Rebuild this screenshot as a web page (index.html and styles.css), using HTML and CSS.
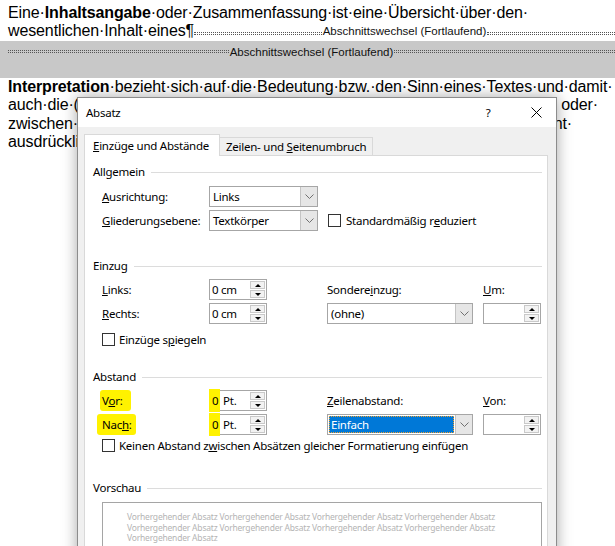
FILE: index.html
```html
<!DOCTYPE html>
<html>
<head>
    <title>Absatz</title>
    <link rel="stylesheet" href="styles.css">
</head>
<body>

<div class="page">
    <!-- Document text behind the dialog -->
    <div class="doc">
        <div class="line">Eine·<b>Inhaltsangabe</b>·oder·Zusammenfassung·ist·eine·Übersicht·über·den·</div>
        <div class="line leader-line">wesentlichen·Inhalt·eines¶<span class="leader"><span class="break-label">Abschnittswechsel (Fortlaufend)</span></span></div>
        <div class="break-band">
            <div class="leader"><span class="break-label">Abschnittswechsel (Fortlaufend)</span></div>
        </div>
        <div class="line"><b>Interpretation</b>·bezieht·sich·auf·die·Bedeutung·bzw.·den·Sinn·eines·Textes·und·damit·</div>
        <div class="line split split-a"><span class="split-left">auch·die·(mögliche)·Absicht·des·Autors</span><span>oder·</span></div>
        <div class="line split split-b"><span class="split-left">zwischen·den·Zeilen·Gesagtes</span><span>nt·</span></div>
        <div class="line">ausdrücklich·gesagt.</div>
    </div>

    <!-- Absatz dialog -->
    <div class="dialog">
        <div class="dialog-title">
            <span class="title-text">Absatz</span>
            <span class="title-help">?</span>
            <span class="title-close">
                <svg width="11" height="11" viewBox="0 0 11 11"><path d="M0.5 0.5 L10.5 10.5 M10.5 0.5 L0.5 10.5" stroke="#000" stroke-width="1" fill="none"/></svg>
            </span>
        </div>

        <div class="dialog-body">
            <div class="tabs">
                <div class="tab tab-active"><u>E</u>inzüge und Abstände</div>
                <div class="tab">Zeilen- und <u>S</u>eitenumbruch</div>
            </div>

            <div class="tab-panel">
                <!-- Allgemein -->
                <div class="group">
                    <div class="group-head">Allgemein</div>
                    <div class="group-body">
                        <div class="field-grid grid-first">
                            <span class="field-label"><u>A</u>usrichtung:</span>
                            <div class="select select-short">
                                <span class="select-value">Links</span>
                                <span class="select-arrow"><svg width="9" height="5" viewBox="0 0 9 5"><path d="M0.5 0.5 L4.5 4.5 L8.5 0.5" stroke="#707070" fill="none"/></svg></span>
                            </div>
                            <span></span><span></span>

                            <span class="field-label"><u>G</u>liederungsebene:</span>
                            <div class="select select-short">
                                <span class="select-value">Textkörper</span>
                                <span class="select-arrow"><svg width="9" height="5" viewBox="0 0 9 5"><path d="M0.5 0.5 L4.5 4.5 L8.5 0.5" stroke="#707070" fill="none"/></svg></span>
                            </div>
                            <div class="check check-inline"><span class="box"></span>Standardmäßig r<u>e</u>duziert</div>
                        </div>
                    </div>
                </div>

                <!-- Einzug -->
                <div class="group group-indent">
                    <div class="group-head">Einzug</div>
                    <div class="group-body">
                        <div class="field-grid">
                            <span class="field-label"><u>L</u>inks:</span>
                            <div class="spin">
                                <span class="spin-value">0 cm</span>
                                <span class="spin-btns"><i class="spin-up"></i><i class="spin-down"></i></span>
                            </div>
                            <span class="field-label">Sondere<u>i</u>nzug:</span>
                            <span class="field-label"><u>U</u>m:</span>

                            <span class="field-label"><u>R</u>echts:</span>
                            <div class="spin">
                                <span class="spin-value">0 cm</span>
                                <span class="spin-btns"><i class="spin-up"></i><i class="spin-down"></i></span>
                            </div>
                            <div class="select select-wide">
                                <span class="select-value">(ohne)</span>
                                <span class="select-arrow"><svg width="9" height="5" viewBox="0 0 9 5"><path d="M0.5 0.5 L4.5 4.5 L8.5 0.5" stroke="#707070" fill="none"/></svg></span>
                            </div>
                            <div class="spin">
                                <span class="spin-value"></span>
                                <span class="spin-btns"><i class="spin-up"></i><i class="spin-down"></i></span>
                            </div>
                        </div>
                        <div class="check check-row check-mirror"><span class="box"></span>Einzüge s<u>p</u>iegeln</div>
                    </div>
                </div>

                <!-- Abstand -->
                <div class="group group-spacing">
                    <div class="group-head">Abstand</div>
                    <div class="group-body">
                        <div class="field-grid">
                            <span class="field-label"><span class="hl hl-vor">V<u>o</u>r:</span></span>
                            <div class="spin">
                                <span class="spin-value"><span class="hl-zero">0</span>&nbsp;Pt.</span>
                                <span class="spin-btns"><i class="spin-up"></i><i class="spin-down"></i></span>
                            </div>
                            <span class="field-label"><u>Z</u>eilenabstand:</span>
                            <span class="field-label"><u>V</u>on:</span>

                            <span class="field-label"><span class="hl hl-nach">Nac<u>h</u>:</span></span>
                            <div class="spin">
                                <span class="spin-value"><span class="hl-zero">0</span>&nbsp;Pt.</span>
                                <span class="spin-btns"><i class="spin-up"></i><i class="spin-down"></i></span>
                            </div>
                            <div class="select select-wide select-focus">
                                <span class="select-value">Einfach</span>
                                <span class="select-arrow"><svg width="9" height="5" viewBox="0 0 9 5"><path d="M0.5 0.5 L4.5 4.5 L8.5 0.5" stroke="#707070" fill="none"/></svg></span>
                            </div>
                            <div class="spin">
                                <span class="spin-value"></span>
                                <span class="spin-btns"><i class="spin-up"></i><i class="spin-down"></i></span>
                            </div>
                        </div>
                        <div class="check check-row check-nospace"><span class="box"></span>Keinen Abstand z<u>w</u>ischen Absätzen gleicher Formatierung einfügen</div>
                    </div>
                </div>

                <!-- Vorschau -->
                <div class="group group-preview">
                    <div class="group-head">Vorschau</div>
                    <div class="group-body">
                        <div class="preview">
                            <div>Vorhergehender Absatz Vorhergehender Absatz Vorhergehender Absatz Vorhergehender Absatz</div>
                            <div>Vorhergehender Absatz Vorhergehender Absatz Vorhergehender Absatz Vorhergehender Absatz</div>
                            <div>Vorhergehender Absatz</div>
                        </div>
                    </div>
                </div>
            </div>
        </div>
    </div>
</div>

</body>
</html>
```

FILE: styles.css
```css
body {
    margin: 0;
    background: #fff;
}

.page {
    position: relative;
    width: 615px;
    height: 546px;
    overflow: hidden;
}

/* Word document behind */
.doc {
    padding-top: 4px;
    font-family: "Liberation Sans", Arial, sans-serif;
    font-size: 16px;
    line-height: 18.4px;
    letter-spacing: -0.12px;
    color: #000;
}

.line {
    padding-left: 8px;
    white-space: nowrap;
    overflow: hidden;
}

.leader-line {
    display: flex;
}

.leader {
    flex: 1;
    display: flex;
    align-items: center;
}

.leader-line .leader {
    align-items: flex-end;
    padding-bottom: 4px;
}

.leader::before,
.leader::after {
    content: "";
    flex: 1;
    height: 1px;
    border-top: 1px dotted #555;
    border-bottom: 1px dotted #555;
    margin-bottom: 2px;
}

.break-label {
    font-size: 11.5px;
    line-height: 11px;
    letter-spacing: 0;
    color: #111;
    padding: 0 1px;
}

.break-band {
    height: 37px;
    background: #c8c8c8;
    padding: 6px 0 0 8px;
    box-sizing: border-box;
}

.split {
    display: flex;
}

.split-left {
    flex: 1;
    min-width: 0;
    overflow: hidden;
}

.split-a {
    padding-right: 17px;
}

.split-b {
    padding-right: 43px;
}

/* Dialog */
.dialog {
    position: absolute;
    left: 77px;
    top: 97px;
    width: 478px;
    height: 470px;
    border: 1px solid #8c8c8c;
    box-shadow: 0 0 14px rgba(0,0,0,0.35);
    font-family: "Noto Sans", "Open Sans", sans-serif;
    font-size: 11.5px;
    letter-spacing: -0.25px;
    color: #000;
    background: #f0f0f0;
}

.dialog-title {
    height: 29px;
    background: #fff;
    display: flex;
    align-items: center;
    padding-left: 8px;
}

.title-text {
    flex: 1;
}

.title-help {
    width: 20px;
    text-align: center;
    margin-right: 18px;
}

.title-close {
    width: 40px;
    display: flex;
    justify-content: center;
}

.dialog-body {
    padding: 7px 8px 0 6px;
}

.tabs {
    display: flex;
    align-items: flex-end;
    height: 21px;
}

.tab {
    height: 17px;
    line-height: 17px;
    padding: 0 6px;
    border: 1px solid #d9d9d9;
    border-bottom: none;
    border-left: none;
    background: #f0f0f0;
    white-space: nowrap;
}

.tab-active {
    position: relative;
    z-index: 1;
    height: 21px;
    line-height: 22px;
    width: 126px;
    padding: 0 0 0 8px;
    margin-bottom: -1px;
    border-left: 1px solid #d9d9d9;
    background: #fff;
}

.tab-panel {
    background: #fff;
    border: 1px solid #d9d9d9;
    height: 420px;
    padding: 8px 5px 0 8px;
}

.group-head {
    height: 16px;
    line-height: 16px;
    display: flex;
    align-items: center;
}

.group-head::after {
    content: "";
    flex: 1;
    border-top: 1px solid #dcdcdc;
    margin-left: 6px;
}

.group-body {
    padding-left: 9px;
}

.group-indent {
    margin-top: 27px;
}

.group-spacing {
    margin-top: 23px;
}

.group-preview {
    margin-top: 28px;
}

.field-grid {
    display: grid;
    grid-template-columns: 107px 118px 156px 59px;
    grid-auto-rows: 21px;
    row-gap: 3px;
    align-items: center;
    margin-top: 5px;
}

.grid-first {
    margin-top: 6px;
}

.field-label {
    white-space: nowrap;
}

/* Dropdowns */
.select {
    height: 21px;
    box-sizing: border-box;
    border: 1px solid #a6a6a6;
    background: #fff;
    display: flex;
}

.select-short {
    width: 109px;
}

.select-wide {
    width: 146px;
}

.select-value {
    flex: 1;
    padding-left: 3px;
    line-height: 19px;
    white-space: nowrap;
}

.select-arrow {
    width: 16px;
    background: #e6e6e6;
    border-left: 1px solid #c4c4c4;
    display: flex;
    align-items: center;
    justify-content: center;
}

.select-focus .select-value {
    margin: 1px;
    padding-left: 2px;
    line-height: 17px;
    background: #0078d7;
    color: #fff;
    outline: 1px dotted #f0a030;
    outline-offset: -1px;
}

/* Spin boxes */
.spin {
    width: 58px;
    height: 21px;
    box-sizing: border-box;
    border: 1px solid #a6a6a6;
    background: #fff;
    display: flex;
}

.spin-value {
    flex: 1;
    padding-left: 2px;
    display: flex;
    align-items: center;
    white-space: nowrap;
}

.spin-btns {
    width: 15px;
    margin: 1px;
    display: flex;
    flex-direction: column;
    gap: 1px;
}

.spin-btns i {
    flex: 1;
    border: 1px solid #c9c9c9;
    background: #f2f2f2;
    display: flex;
    align-items: center;
    justify-content: center;
}

.spin-btns i::after {
    content: "";
    border-left: 3px solid transparent;
    border-right: 3px solid transparent;
}

.spin-up::after {
    border-bottom: 3px solid #000;
}

.spin-down::after {
    border-top: 3px solid #000;
}

/* Text marker highlights */
.hl {
    display: inline-block;
    background: #fff200;
    line-height: 21px;
    border-radius: 3px;
}

.hl-vor {
    padding: 0 9px 0 2px;
    margin-left: -2px;
}

.hl-nach {
    padding: 0 4px 0 5px;
    margin-left: -5px;
}

.hl-zero {
    display: inline-block;
    background: #fff200;
    height: 23px;
    line-height: 23px;
    padding: 0 2px 0 3px;
    margin-left: -3px;
}

/* Checkboxes */
.check {
    display: flex;
    align-items: center;
    white-space: nowrap;
}

.check .box {
    width: 11px;
    height: 11px;
    border: 1px solid #333;
    background: #fff;
    margin-right: 5px;
    flex: none;
}

.check-inline {
    grid-column: 3 / span 2;
    padding-left: 1px;
}

.check-row {
    height: 13px;
}

.check-row .box {
    margin-right: 4px;
}

.check-mirror {
    margin-top: 9px;
}

.check-nospace {
    margin-top: 4px;
}

/* Preview */
.preview {
    margin-top: 6px;
    height: 60px;
    border: 1px solid #a5a5a5;
    padding: 9px 0 0 24px;
    font-size: 8.5px;
    line-height: 10.5px;
    letter-spacing: -0.2px;
    color: #b4b4b4;
    white-space: nowrap;
}
```
